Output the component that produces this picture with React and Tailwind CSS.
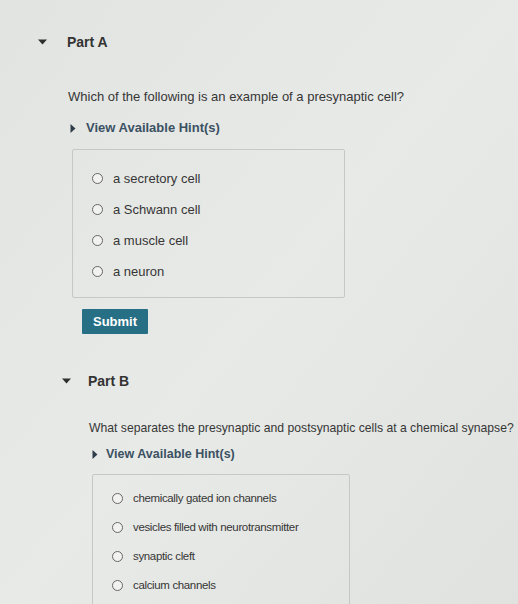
import React from "react";

function Down() {
  return (
    <svg width="9" height="6" viewBox="0 0 9 6" className="shrink-0">
      <path d="M0 0.5 L9 0.5 L4.5 5.5 Z" fill="#2f2f2f" />
    </svg>
  );
}

function Right() {
  return (
    <svg width="6" height="9" viewBox="0 0 6 9" className="shrink-0">
      <path d="M0.5 0 L5.5 4.5 L0.5 9 Z" fill="#2f3d4a" />
    </svg>
  );
}

function Radio() {
  return <span className="block h-[11px] w-[11px] shrink-0 rounded-full border-[1.5px] border-[#666] bg-[#f2f2f0]" />;
}

export default function App() {
  const optsA = ["a secretory cell", "a Schwann cell", "a muscle cell", "a neuron"];
  const optsB = [
    "chemically gated ion channels",
    "vesicles filled with neurotransmitter",
    "synaptic cleft",
    "calcium channels",
  ];
  return (
    <div
      className="min-h-screen w-full overflow-hidden bg-gradient-to-br from-[#e2e4e1] via-[#e8eae7] to-[#e0e2df] text-[#363636]"
      style={{ fontFamily: '"Liberation Sans", Arial, sans-serif' }}
    >
      {/* Part A */}
      <section className="pt-[34px]">
        <div className="flex h-[16px] items-center pl-[38px]">
          <Down />
          <span className="ml-[20px] text-[14px] font-bold text-[#333]">Part A</span>
        </div>
        <p className="mt-[38px] pl-[68px] text-[13px] leading-[18px]">
          Which of the following is an example of a presynaptic cell?
        </p>
        <div className="mt-[13px] flex h-[18px] items-center pl-[70px]">
          <Right />
          <span className="ml-[10px] text-[13px] font-bold text-[#3b5163]">View Available Hint(s)</span>
        </div>
        <div className="ml-[72px] mt-[12px] w-[273px] rounded-[2px] border border-[#c6c8c4] pb-[10px] pl-[19px] pt-[13px]">
          {optsA.map((o) => (
            <div key={o} className="flex h-[31px] items-center">
              <Radio />
              <span className="ml-[10px] text-[13px]">{o}</span>
            </div>
          ))}
        </div>
        <button className="ml-[82px] mt-[11px] flex h-[25px] w-[66px] items-center justify-center rounded-[1px] bg-[#266f84] text-[13px] font-bold text-white">
          Submit
        </button>
      </section>

      {/* Part B */}
      <section className="mt-[39px]">
        <div className="flex h-[16px] items-center pl-[62px]">
          <Down />
          <span className="ml-[17px] text-[14px] font-bold text-[#333]">Part B</span>
        </div>
        <p className="mt-[30px] whitespace-nowrap pl-[89px] text-[12.2px] leading-[18px]">
          What separates the presynaptic and postsynaptic cells at a chemical synapse?
        </p>
        <div className="mt-[8px] flex h-[18px] items-center pl-[92px]">
          <Right />
          <span className="ml-[8px] text-[12.5px] font-bold text-[#3b5163]">View Available Hint(s)</span>
        </div>
        <div className="ml-[92px] mt-[11px] w-[258px] rounded-[2px] border border-[#c6c8c4] pb-[20px] pl-[19px] pt-[9px]">
          {optsB.map((o) => (
            <div key={o} className="flex h-[29px] items-center">
              <Radio />
              <span className="ml-[10px] text-[11.5px] tracking-[-0.35px]">{o}</span>
            </div>
          ))}
        </div>
      </section>
    </div>
  );
}
